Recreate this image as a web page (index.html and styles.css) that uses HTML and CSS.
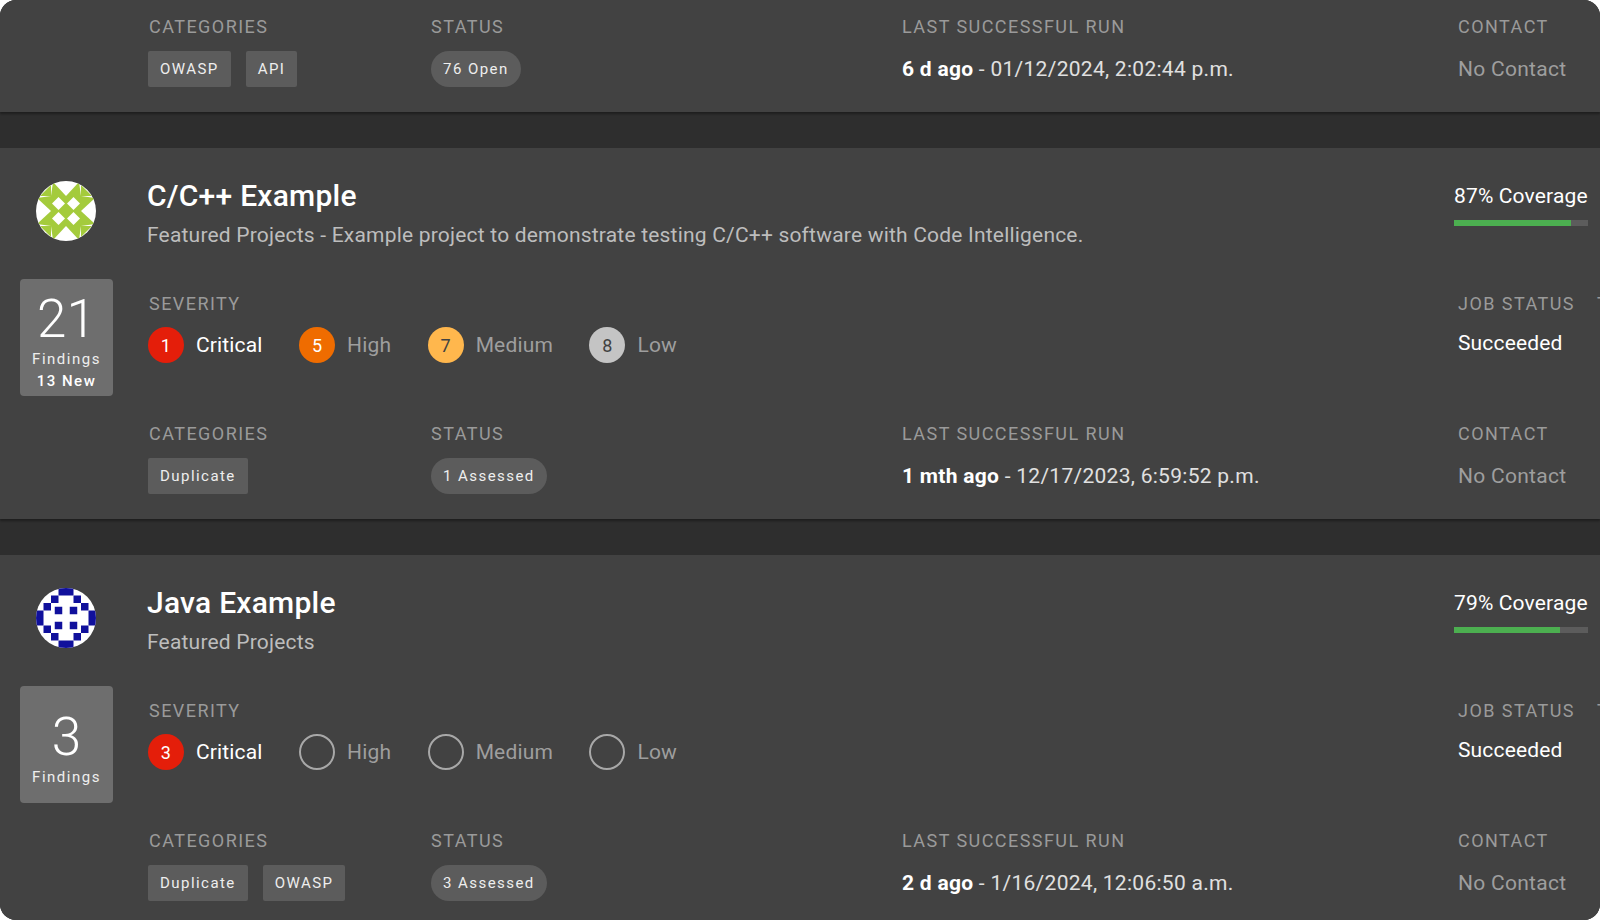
FILE: index.html
```html
<!DOCTYPE html>
<html>
<head>
    <title>Projects</title>
    <link rel="stylesheet" href="styles.css">
</head>
<body>
    <div class="frame">

        <!-- previous project, scrolled out of view -->
        <section class="card card-cut">
            <div class="foot">
                <div>
                    <div class="label">CATEGORIES</div>
                    <div class="chips"><span class="chip">OWASP</span><span class="chip">API</span></div>
                </div>
                <div>
                    <div class="label">STATUS</div>
                    <div class="chips"><span class="chip pill">76 Open</span></div>
                </div>
                <div>
                    <div class="label">LAST SUCCESSFUL RUN</div>
                    <div class="run"><strong>6 d ago</strong> - 01/12/2024, 2:02:44 p.m.</div>
                </div>
                <div>
                    <div class="label">CONTACT</div>
                    <div class="run muted">No Contact</div>
                </div>
            </div>
        </section>

        <section class="card">
            <div class="head">
                <svg class="avatar" viewBox="0 0 60 60">
                    <rect width="60" height="60" fill="#fff"/>
                    <g id="greenSide" fill="#a4cb3c">
                        <polygon points="15,15 30,15 17,1"/>
                        <polygon points="45,15 30,15 43,1"/>
                        <polygon points="15,4 15,15 4,15"/>
                    </g>
                    <use href="#greenSide" transform="rotate(90 30 30)"/>
                    <use href="#greenSide" transform="rotate(180 30 30)"/>
                    <use href="#greenSide" transform="rotate(270 30 30)"/>
                    <rect x="15" y="15" width="30" height="30" fill="#a4cb3c"/>
                    <g fill="#fff">
                        <polygon points="22.5,16 29,22.5 22.5,29 16,22.5"/>
                        <polygon points="37.5,16 44,22.5 37.5,29 31,22.5"/>
                        <polygon points="22.5,31 29,37.5 22.5,44 16,37.5"/>
                        <polygon points="37.5,31 44,37.5 37.5,44 31,37.5"/>
                    </g>
                </svg>
                <div class="title-block">
                    <h2>C/C++ Example</h2>
                    <p>Featured Projects - Example project to demonstrate testing C/C++ software with Code Intelligence.</p>
                </div>
                <div class="coverage">
                    <div>87% Coverage</div>
                    <div class="bar"><div class="bar-fill" style="width: 87%"></div></div>
                </div>
            </div>
            <div class="mid">
                <div class="findings">
                    <div class="count">21</div>
                    <div class="findings-label">Findings</div>
                    <div class="findings-new">13 New</div>
                </div>
                <div class="severity">
                    <div class="label">SEVERITY</div>
                    <div class="levels">
                        <span class="level on"><i class="dot critical">1</i>Critical</span>
                        <span class="level"><i class="dot high">5</i>High</span>
                        <span class="level"><i class="dot medium">7</i>Medium</span>
                        <span class="level"><i class="dot low">8</i>Low</span>
                    </div>
                </div>
                <div class="job">
                    <div class="label">JOB STATUS</div>
                    <div class="job-value">Succeeded</div>
                </div>
                <div class="label extra">TESTS</div>
            </div>
            <div class="foot">
                <div>
                    <div class="label">CATEGORIES</div>
                    <div class="chips"><span class="chip">Duplicate</span></div>
                </div>
                <div>
                    <div class="label">STATUS</div>
                    <div class="chips"><span class="chip pill">1 Assessed</span></div>
                </div>
                <div>
                    <div class="label">LAST SUCCESSFUL RUN</div>
                    <div class="run"><strong>1 mth ago</strong> - 12/17/2023, 6:59:52 p.m.</div>
                </div>
                <div>
                    <div class="label">CONTACT</div>
                    <div class="run muted">No Contact</div>
                </div>
            </div>
        </section>

        <section class="card">
            <div class="head">
                <svg class="avatar" viewBox="0 0 60 60">
                    <rect width="60" height="60" fill="#fff"/>
                    <g fill="#10109c">
                        <rect x="22.5" y="0" width="15" height="7.5"/>
                        <rect x="22.5" y="52.5" width="15" height="7.5"/>
                        <rect x="0" y="22.5" width="7.5" height="15"/>
                        <rect x="52.5" y="22.5" width="7.5" height="15"/>
                        <rect x="15" y="7.5" width="7.5" height="7.5"/>
                        <rect x="37.5" y="7.5" width="7.5" height="7.5"/>
                        <rect x="7.5" y="15" width="7.5" height="7.5"/>
                        <rect x="45" y="15" width="7.5" height="7.5"/>
                        <rect x="7.5" y="37.5" width="7.5" height="7.5"/>
                        <rect x="45" y="37.5" width="7.5" height="7.5"/>
                        <rect x="15" y="45" width="7.5" height="7.5"/>
                        <rect x="37.5" y="45" width="7.5" height="7.5"/>
                        <rect x="18.75" y="18.75" width="7.5" height="7.5"/>
                        <rect x="33.75" y="18.75" width="7.5" height="7.5"/>
                        <rect x="18.75" y="33.75" width="7.5" height="7.5"/>
                        <rect x="33.75" y="33.75" width="7.5" height="7.5"/>
                    </g>
                </svg>
                <div class="title-block">
                    <h2>Java Example</h2>
                    <p>Featured Projects</p>
                </div>
                <div class="coverage">
                    <div>79% Coverage</div>
                    <div class="bar"><div class="bar-fill" style="width: 79%"></div></div>
                </div>
            </div>
            <div class="mid">
                <div class="findings">
                    <div class="count">3</div>
                    <div class="findings-label">Findings</div>
                </div>
                <div class="severity">
                    <div class="label">SEVERITY</div>
                    <div class="levels">
                        <span class="level on"><i class="dot critical">3</i>Critical</span>
                        <span class="level"><i class="dot empty"></i>High</span>
                        <span class="level"><i class="dot empty"></i>Medium</span>
                        <span class="level"><i class="dot empty"></i>Low</span>
                    </div>
                </div>
                <div class="job">
                    <div class="label">JOB STATUS</div>
                    <div class="job-value">Succeeded</div>
                </div>
                <div class="label extra">TESTS</div>
            </div>
            <div class="foot">
                <div>
                    <div class="label">CATEGORIES</div>
                    <div class="chips"><span class="chip">Duplicate</span><span class="chip">OWASP</span></div>
                </div>
                <div>
                    <div class="label">STATUS</div>
                    <div class="chips"><span class="chip pill">3 Assessed</span></div>
                </div>
                <div>
                    <div class="label">LAST SUCCESSFUL RUN</div>
                    <div class="run"><strong>2 d ago</strong> - 1/16/2024, 12:06:50 a.m.</div>
                </div>
                <div>
                    <div class="label">CONTACT</div>
                    <div class="run muted">No Contact</div>
                </div>
            </div>
        </section>

    </div>
</body>
</html>
```

FILE: styles.css
```css
* { box-sizing: border-box; }
html, body { margin: 0; background: #fff; }
body { font-family: Roboto, Arial, sans-serif; overflow: hidden; }

.frame { height: 920px; background: #2e2e2e; border-radius: 16px; overflow: hidden; display: flex; flex-direction: column; gap: 36px; }

.card { flex: none; background: #424242; padding: 31px 0 25px; box-shadow: 0 2px 2px rgba(0, 0, 0, 0.35); color: #fff; }
.card-cut { padding-top: 16px; }
.card-cut .foot { padding-top: 0; }

.head { display: flex; height: 100px; padding-right: 12px; }
.avatar { width: 60px; height: 60px; margin: 2px 51px 0 36px; border-radius: 50%; flex: none; }
.title-block { flex: 1; }
.title-block h2 { margin: 0 0 8px; font-size: 30px; line-height: 34px; font-weight: 500; letter-spacing: 0.25px; }
.title-block p { margin: 0; font-size: 21px; line-height: 28px; letter-spacing: 0.2px; color: #bdbdbd; }

.coverage { width: 134px; font-size: 21px; line-height: 34px; letter-spacing: 0.15px; white-space: nowrap; }
.bar { height: 6px; margin-top: 7px; background: #5c5c5c; }
.bar-fill { height: 100%; background: #4caf50; }

.mid { display: flex; height: 117px; overflow: hidden; }
.findings { width: 93px; height: 117px; margin: 0 35px 0 20px; padding-top: 6px; background: #6e6e6e; border-radius: 4px; display: flex; flex-direction: column; align-items: center; justify-content: center; flex: none; }
.count { font-size: 53px; line-height: 58px; font-weight: 300; }
.findings-label { font-size: 15px; line-height: 22px; letter-spacing: 1.5px; color: #eee; }
.findings-new { font-size: 15px; line-height: 22px; letter-spacing: 1.5px; font-weight: 500; }

.label { font-size: 18px; line-height: 22px; letter-spacing: 1.45px; color: #9a9a9a; white-space: nowrap; }
.severity .label, .foot > div:first-child .label { margin-left: 1px; }

.severity { width: 1310px; padding-top: 14px; flex: none; }
.levels { display: flex; gap: 36.5px; margin-top: 12px; }
.level { display: flex; align-items: center; gap: 12px; font-size: 21px; letter-spacing: 0.15px; color: #9e9e9e; }
.level.on { color: #fff; }
.dot { width: 36px; height: 36px; border-radius: 50%; display: flex; align-items: center; justify-content: center; font-style: normal; font-size: 18px; color: #fff; }
.critical { background: #e41e0a; }
.high { background: #ef6c00; }
.medium { background: #ffb74d; color: #424242; }
.low { background: #c4c4c4; color: #424242; }
.empty { border: 2px solid #a8a8a8; }

.job { width: 139px; padding-top: 14px; flex: none; }
.job-value { margin-top: 14px; font-size: 21px; line-height: 28px; letter-spacing: 0.15px; }
.extra { padding-top: 14px; }

.foot { display: grid; grid-template-columns: 283px 471px 556px 139px; padding: 27px 0 0 148px; }
.chips { display: flex; gap: 15px; margin-top: 13px; }
.chip { height: 36px; padding: 0 12px; background: #5c5c5c; border-radius: 2px; font-size: 15px; line-height: 36px; letter-spacing: 1.45px; color: #eee; }
.pill { border-radius: 18px; }
.run { margin-top: 13px; font-size: 21px; line-height: 36px; letter-spacing: 0.28px; color: #e0e0e0; white-space: nowrap; }
.run strong { font-weight: 700; color: #fff; }
.muted { color: #9e9e9e; }
```
